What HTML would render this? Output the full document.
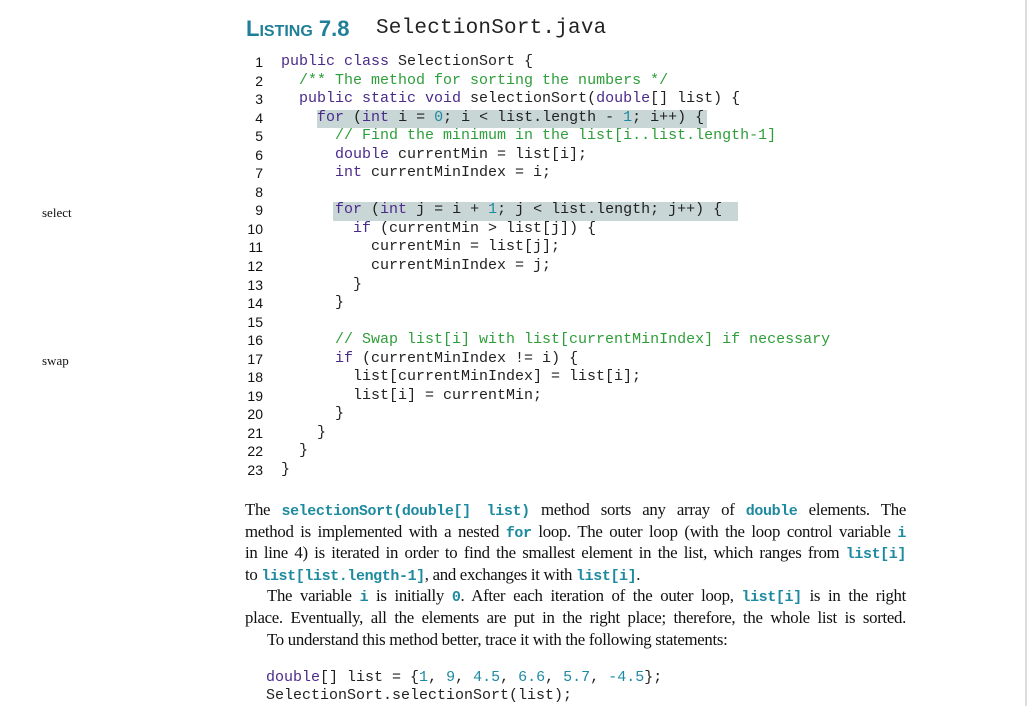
<!DOCTYPE html>
<html><head><meta charset="utf-8"><style>
body{margin:0;width:1027px;height:706px;background:#fff;position:relative;overflow:hidden}
.rb{position:absolute;left:1025px;top:0;width:2px;height:706px;background:#ddd}
.t{position:absolute;left:246px;top:16px;font-family:"Liberation Sans",sans-serif;font-weight:bold;color:#1f7f98;font-size:22px}
.t small{font-size:16px}
.tf{position:absolute;left:376px;top:17px;font-family:"Liberation Mono",monospace;font-size:21px;color:#222;letter-spacing:0.2px}
.ln{position:absolute;left:230px;width:33px;text-align:right;font-family:"Liberation Sans",sans-serif;font-size:14px;color:#111;line-height:18.55px}
.c{position:absolute;left:281px;font-family:"Liberation Mono",monospace;font-size:15px;color:#222;line-height:18.55px;white-space:pre}
.k{color:#4b2a8c}.g{color:#2e9e3a}.n{color:#1d8aa0}
.hl{position:absolute;background:#c9d6d6}
.m{position:absolute;left:42px;font-family:"Liberation Serif",serif;font-size:13px;color:#111}
.p{position:absolute;left:245px;width:661px;font-family:"Liberation Serif",serif;font-size:16.8px;color:#111;line-height:21.6px}
.p div{text-align:justify;text-align-last:justify;white-space:nowrap;letter-spacing:-0.3px;height:21.6px}
.p div.l{text-align-last:left}
.p div.i{padding-left:22px}
.p code{font-family:"Liberation Mono",monospace;color:#1d8aa0;font-size:15px;font-weight:bold;letter-spacing:-0.4px}
.b{position:absolute;left:266px;font-family:"Liberation Mono",monospace;font-size:15px;color:#222;line-height:18px;white-space:pre}
</style></head><body>
<div class="rb"></div>
<div class="t">L<small>ISTING</small> 7.8</div>
<div class="tf">SelectionSort.java</div>
<div class="hl" style="left:317px;top:110px;width:390px;height:18px"></div>
<div class="hl" style="left:333px;top:202px;width:405px;height:19px"></div>
<div class="m" style="top:205px">select</div>
<div class="m" style="top:353px">swap</div>
<div class="ln" style="top:53px">1<br>2<br>3<br>4<br>5<br>6<br>7<br>8<br>9<br>10<br>11<br>12<br>13<br>14<br>15<br>16<br>17<br>18<br>19<br>20<br>21<br>22<br>23</div>
<div class="c" style="top:53px"><span class="k">public class</span> SelectionSort {
  <span class="g">/** The method for sorting the numbers */</span>
  <span class="k">public static void</span> selectionSort(<span class="k">double</span>[] list) {
    <span class="k">for</span> (<span class="k">int</span> i = <span class="n">0</span>; i &lt; list.length - <span class="n">1</span>; i++) {
      <span class="g">// Find the minimum in the list[i..list.length-1]</span>
      <span class="k">double</span> currentMin = list[i];
      <span class="k">int</span> currentMinIndex = i;

      <span class="k">for</span> (<span class="k">int</span> j = i + <span class="n">1</span>; j &lt; list.length; j++) {
        <span class="k">if</span> (currentMin &gt; list[j]) {
          currentMin = list[j];
          currentMinIndex = j;
        }
      }

      <span class="g">// Swap list[i] with list[currentMinIndex] if necessary</span>
      <span class="k">if</span> (currentMinIndex != i) {
        list[currentMinIndex] = list[i];
        list[i] = currentMin;
      }
    }
  }
}</div>
<div class="p" style="top:499px">
<div>The <code>selectionSort(double[] list)</code> method sorts any array of <code>double</code> elements. The</div>
<div>method is implemented with a nested <code>for</code> loop. The outer loop (with the loop control variable <code>i</code></div>
<div>in line 4) is iterated in order to find the smallest element in the list, which ranges from <code>list[i]</code></div>
<div class="l">to <code>list[list.length-1]</code>, and exchanges it with <code>list[i]</code>.</div>
<div class="i">The variable <code>i</code> is initially <code>0</code>. After each iteration of the outer loop, <code>list[i]</code> is in the right</div>
<div>place. Eventually, all the elements are put in the right place; therefore, the whole list is sorted.</div>
<div class="l i">To understand this method better, trace it with the following statements:</div>
</div>
<div class="b" style="top:669px"><span class="k">double</span>[] list = {<span class="n">1</span>, <span class="n">9</span>, <span class="n">4.5</span>, <span class="n">6.6</span>, <span class="n">5.7</span>, <span class="n">-4.5</span>};
SelectionSort.selectionSort(list);</div>
</body></html>
